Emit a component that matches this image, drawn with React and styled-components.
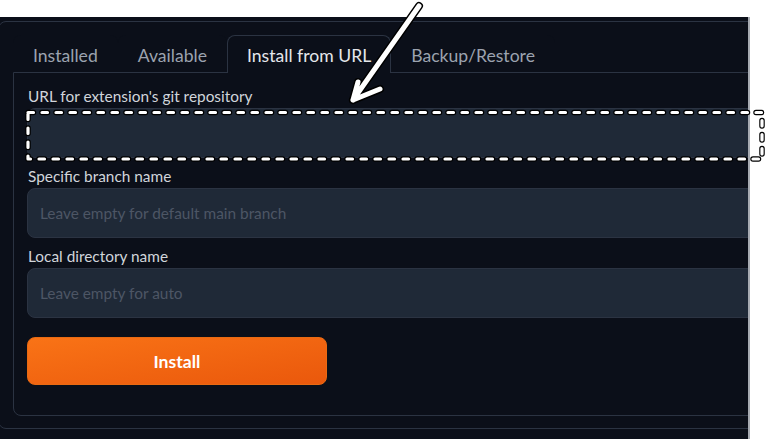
import React from "react";
import styled, { createGlobalStyle } from "styled-components";

const GlobalStyle = createGlobalStyle`
  html, body {
    margin: 0;
    padding: 0;
    background: #ffffff;
  }
  body {
    font-family: "Lato", "Noto Sans", sans-serif;
  }
  * {
    box-sizing: border-box;
  }
`;

// STYLED COMPONENTS
const Page = styled.div`
  position: relative;
  width: 768px;
  height: 439px;
  padding-top: 17px;
  overflow: hidden;
`;
const Frame = styled.div`
  width: 750px;
  height: 422px;
  background: #0b0f19;
  border-right: 2px solid #a7abb2;
  overflow: hidden;
`;
const Block = styled.div`
  margin-top: 4px;
  margin-left: -2px;
  width: 820px;
  height: 408px;
  border: 1px solid #2b3342;
  border-radius: 8px;
  padding: 13px 0 12px 14px;
`;
const TabBar = styled.div`
  display: flex;
  height: 37px;
  position: relative;
  z-index: 1;
`;
const Tab = styled.div`
  display: flex;
  align-items: center;
  padding: 2px 19px 0 19px;
  font-size: 17.6px;
  color: ${(p) => (p.$active ? "#e5e7eb" : "#9ca3af")};
  border: 1px solid ${(p) => (p.$active ? "#2b3342" : "transparent")};
  border-bottom: none;
  border-radius: 8px 8px 0 0;
  background: #0b0f19;
  margin-bottom: ${(p) => (p.$active ? "-1px" : "0")};
  height: ${(p) => (p.$active ? "38px" : "37px")};
`;
const Panel = styled.div`
  border: 1px solid #2b3342;
  border-radius: 0 0 8px 8px;
  height: 344px;
  padding: 13px 0 0 13px;
  display: flex;
  flex-direction: column;
`;
const Field = styled.div`
  display: flex;
  flex-direction: column;
  margin-bottom: 8px;
`;
const Label = styled.label`
  font-size: 15.4px;
  line-height: 20px;
  color: #d1d5db;
  margin-bottom: 2px;
  padding-left: 1px;
`;
const Input = styled.input`
  width: 760px;
  height: 50px;
  background: #1f2937;
  border: 1px solid #2b3342;
  border-radius: 8px;
  padding: 0 12px;
  font-family: inherit;
  font-size: 15.4px;
  color: #e5e7eb;
  outline: none;
  &::placeholder {
    color: #4d5665;
  }
`;
const Button = styled.button`
  margin-top: 11px;
  width: 300px;
  height: 48px;
  border: 1px solid #ea6a12;
  border-radius: 8px;
  background: linear-gradient(to bottom right, #f97316, #ea580c);
  color: #ffffff;
  font-family: inherit;
  font-size: 17.6px;
  font-weight: 700;
  cursor: pointer;
`;
const Overlay = styled.svg`
  position: absolute;
  left: 0;
  top: 0;
  z-index: 10;
  pointer-events: none;
`;

function Annotation() {
  return (
    <Overlay width="768" height="439" viewBox="0 0 768 439">
      <g fill="none" strokeLinecap="round" strokeLinejoin="round">
        <rect
          x="28"
          y="112.5"
          width="734"
          height="46.5"
          stroke="#000"
          strokeWidth="5.5"
          strokeDasharray="5.5 8.5"
        />
        <rect
          x="28"
          y="112.5"
          width="734"
          height="46.5"
          stroke="#fff"
          strokeWidth="3.2"
          strokeDasharray="5.5 8.5"
        />
        <path
          d="M419 6 L353 100 M353 100 L358 82 M353 100 L380 89"
          stroke="#000"
          strokeWidth="8"
        />
        <path
          d="M419 6 L353 100 M353 100 L358 82 M353 100 L380 89"
          stroke="#fff"
          strokeWidth="5"
        />
      </g>
    </Overlay>
  );
}

const tabs = ["Installed", "Available", "Install from URL", "Backup/Restore"];

export default function App() {
  return (
    <>
      <GlobalStyle />
      <Page>
        <Frame>
          <Block>
            <TabBar>
              {tabs.map((t) => (
                <Tab key={t} $active={t === "Install from URL"}>
                  {t}
                </Tab>
              ))}
            </TabBar>
            <Panel>
              <Field>
                <Label>URL for extension's git repository</Label>
                <Input type="text" />
              </Field>
              <Field>
                <Label>Specific branch name</Label>
                <Input
                  type="text"
                  placeholder="Leave empty for default main branch"
                />
              </Field>
              <Field>
                <Label>Local directory name</Label>
                <Input type="text" placeholder="Leave empty for auto" />
              </Field>
              <Button>Install</Button>
            </Panel>
          </Block>
        </Frame>
        <Annotation />
      </Page>
    </>
  );
}
